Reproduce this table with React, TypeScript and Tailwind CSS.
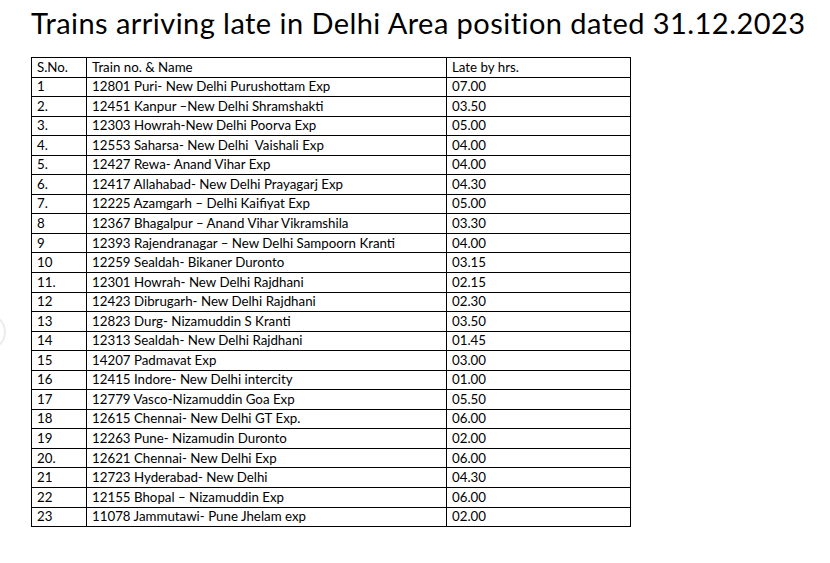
import React from 'react';

const rows: [string, string, string][] = [
  ['1', '12801 Puri- New Delhi Purushottam Exp', '07.00'],
  ['2.', '12451 Kanpur \u2013New Delhi Shramshakti', '03.50'],
  ['3.', '12303 Howrah-New Delhi Poorva Exp', '05.00'],
  ['4.', '12553 Saharsa- New Delhi  Vaishali Exp', '04.00'],
  ['5.', '12427 Rewa- Anand Vihar Exp', '04.00'],
  ['6.', '12417 Allahabad- New Delhi Prayagarj Exp', '04.30'],
  ['7.', '12225 Azamgarh \u2013 Delhi Kaifiyat Exp', '05.00'],
  ['8', '12367 Bhagalpur \u2013 Anand Vihar Vikramshila', '03.30'],
  ['9', '12393 Rajendranagar \u2013 New Delhi Sampoorn Kranti', '04.00'],
  ['10', '12259 Sealdah- Bikaner Duronto', '03.15'],
  ['11.', '12301 Howrah- New Delhi Rajdhani', '02.15'],
  ['12', '12423 Dibrugarh- New Delhi Rajdhani', '02.30'],
  ['13', '12823 Durg- Nizamuddin S Kranti', '03.50'],
  ['14', '12313 Sealdah- New Delhi Rajdhani', '01.45'],
  ['15', '14207 Padmavat Exp', '03.00'],
  ['16', '12415 Indore- New Delhi intercity', '01.00'],
  ['17', '12779 Vasco-Nizamuddin Goa Exp', '05.50'],
  ['18', '12615 Chennai- New Delhi GT Exp.', '06.00'],
  ['19', '12263 Pune- Nizamudin Duronto', '02.00'],
  ['20.', '12621 Chennai- New Delhi Exp', '06.00'],
  ['21', '12723 Hyderabad- New Delhi', '04.30'],
  ['22', '12155 Bhopal \u2013 Nizamuddin Exp', '06.00'],
  ['23', '11078 Jammutawi- Pune Jhelam exp', '02.00'],
];

function Row({ cells }: { cells: [string, string, string] }) {
  return (
    <tr className="h-[19.55px]">
      {cells.map((c, i) => (
        <td
          key={i}
          className={
            'border border-black px-[5px] py-0 align-middle leading-none whitespace-pre ' +
            (i === 0 ? 'w-[55px]' : i === 1 ? 'w-[360px]' : 'w-[184px]')
          }
        >
          {c}
        </td>
      ))}
    </tr>
  );
}

export default function App() {
  return (
    <div className="relative w-[830px] h-[563px] overflow-hidden bg-white text-black font-['Lato',sans-serif]">
      <div className="absolute left-[-30px] top-[314px] w-[36px] h-[36px] rounded-full border-2 border-[#ececec]" />
      <div className="pl-[31px] pt-[6px]">
        <h1 className="text-[29px] leading-[34px] tracking-[0.45px]">
          Trains arriving late in Delhi Area position dated 31.12.2023
        </h1>
        <table className="mt-[17px] border-collapse text-[13.3px] table-fixed w-[599px]">
          <tbody>
            <Row cells={['S.No.', 'Train no. & Name', 'Late by hrs.']} />
            {rows.map((r) => (
              <Row key={r[0] + r[1]} cells={r} />
            ))}
          </tbody>
        </table>
      </div>
    </div>
  );
}
